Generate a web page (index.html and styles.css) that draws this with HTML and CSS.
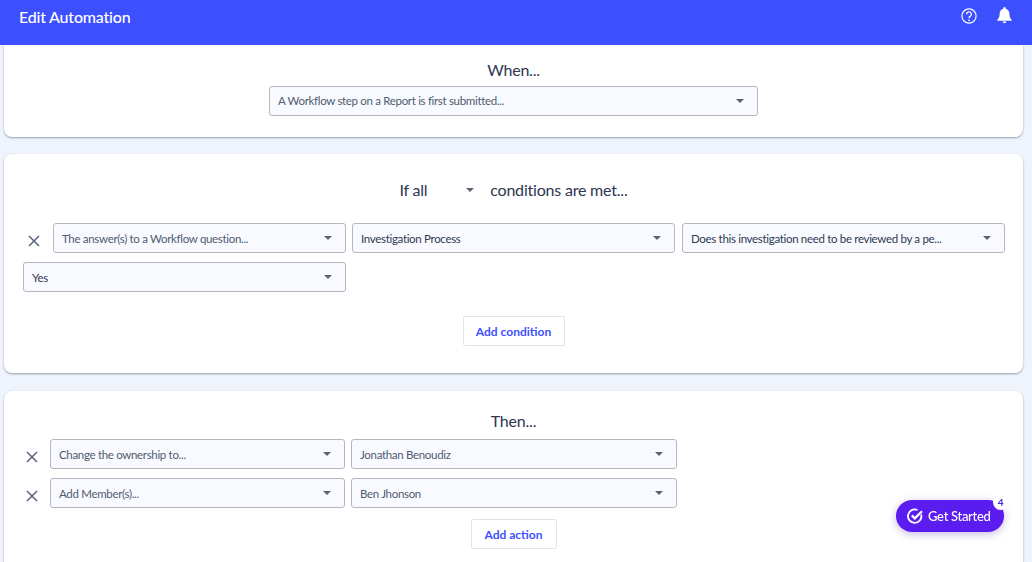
FILE: index.html
```html
<!DOCTYPE html>
<html lang="en">
<head>
<meta charset="utf-8">
<title>Edit Automation</title>
<link rel="stylesheet" href="styles.css">
</head>
<body>
<header class="topbar">
  <h1 class="topbar-title">Edit Automation</h1>
  <div class="topbar-icons">
    <svg class="icon-help" width="16" height="16" viewBox="0 0 18 18" fill="none" stroke="#fff"><circle cx="9" cy="9" r="8" stroke-width="1.300"/><path d="M6.300 7a2.700 2.700 0 1 1 4 2.400c-.9.500-1.300 1-1.300 2" stroke-width="1.500"/><circle cx="9" cy="13.800" r="1" fill="#fff" stroke="none"/></svg>
    <svg class="icon-bell" width="15" height="17" viewBox="0 0 16 18" fill="#fff"><path d="M8 0a1.300 1.300 0 0 0-1.300 1.300v.6C4.300 2.500 2.800 4.500 2.800 7.200c0 3.400-.9 4.700-2.300 6.200-.4.500 0 1.100.6 1.100h13.800c.6 0 1-.6.6-1.100-1.400-1.500-2.300-2.800-2.300-6.200 0-2.700-1.500-4.700-3.900-5.300v-.6A1.300 1.300 0 0 0 8 0z"/><path d="M6.100 15.500a1.900 1.900 0 0 0 3.800 0z"/></svg>
  </div>
</header>

<main class="content">
  <section class="card card-when">
    <h2 class="card-title">When...</h2>
    <div class="center-row">
      <div class="select select-when"><span class="select-text lift">A Workflow step on a Report is first submitted...</span><i class="caret"></i></div>
    </div>
  </section>

  <section class="card card-if">
    <h2 class="card-title if-title">If all <span class="inline-select"><i class="caret"></i></span> conditions are met...</h2>
    <div class="condition-rows">
      <div class="condition-row">
        <button class="remove" type="button" aria-label="Remove"><svg width="12" height="12" viewBox="0 0 12 12" stroke="#56627c" stroke-width="1.500" fill="none"><path d="M1 1l10 10M11 1L1 11"/></svg></button>
        <div class="select w-293"><span class="select-text">The answer(s) to a Workflow question...</span><i class="caret"></i></div>
        <div class="select w-323"><span class="select-text dark">Investigation Process</span><i class="caret"></i></div>
        <div class="select w-323 push-1"><span class="select-text dark">Does this investigation need to be reviewed by a pe...</span><i class="caret"></i></div>
      </div>
      <div class="condition-row">
        <div class="select w-323"><span class="select-text dark">Yes</span><i class="caret"></i></div>
      </div>
    </div>
    <div class="center-row"><button class="add-btn btn-condition" type="button">Add condition</button></div>
  </section>

  <section class="card card-then">
    <h2 class="card-title">Then...</h2>
    <div class="action-rows">
      <div class="action-row">
        <button class="remove" type="button" aria-label="Remove"><svg width="12" height="12" viewBox="0 0 12 12" stroke="#56627c" stroke-width="1.500" fill="none"><path d="M1 1l10 10M11 1L1 11"/></svg></button>
        <div class="select w-295"><span class="select-text">Change the ownership to...</span><i class="caret"></i></div>
        <div class="select w-326"><span class="select-text">Jonathan Benoudiz</span><i class="caret"></i></div>
      </div>
      <div class="action-row">
        <button class="remove" type="button" aria-label="Remove"><svg width="12" height="12" viewBox="0 0 12 12" stroke="#56627c" stroke-width="1.500" fill="none"><path d="M1 1l10 10M11 1L1 11"/></svg></button>
        <div class="select w-295"><span class="select-text">Add Member(s)...</span><i class="caret"></i></div>
        <div class="select w-326"><span class="select-text">Ben Jhonson</span><i class="caret"></i></div>
      </div>
    </div>
    <div class="center-row"><button class="add-btn btn-action" type="button">Add action</button></div>
  </section>
</main>

<button class="get-started" type="button">
  <svg width="16" height="16" viewBox="0 0 16 16" fill="none" stroke="#fff" stroke-width="1.800"><path d="M14.200 6.500A6.700 6.700 0 1 1 10.500 2"/><path d="M4.800 7.400l3 3L15 3.200" stroke-width="2.200"/></svg>
  <span>Get Started</span>
  <b class="badge">4</b>
</button>
</body>
</html>
```

FILE: styles.css
```css
* { box-sizing: border-box; }
html, body { height: 100%; }
body {
  margin: 0;
  height: 562px;
  overflow: hidden;
  background: #eff3fb;
  font-family: Lato, "Open Sans", sans-serif;
  color: #2c3650;
}
.topbar {
  height: 45px;
  background: #3d50ff;
  display: flex;
  align-items: flex-start;
  justify-content: space-between;
  padding: 0 20px 0 19px;
}
.topbar-title {
  margin: 5px 0 0;
  color: #fff;
  font-size: 16px;
  font-weight: 500;
  letter-spacing: -.2px;
  line-height: 24px;
}
.topbar-icons {
  display: flex;
  align-items: center;
  gap: 20px;
  padding: 7px 0 0;
}
.content {
  padding: 0 9px 0 4px;
  display: flex;
  flex-direction: column;
  gap: 17px;
}
.card {
  background: #fff;
  border-radius: 8px;
  box-shadow: 0 1px 2px rgba(40, 50, 80, .45);
}
.card-when {
  height: 92px;
  border-radius: 0 0 8px 8px;
  padding-top: 14px;
}
.card-when .card-title { margin-bottom: 6px; }
.card-if { height: 219px; padding-top: 24px; margin-bottom: 1px; }
.card-then {
  height: 171px;
  padding-top: 19px;
  border-radius: 8px 8px 0 0;
}
.card-title {
  margin: 0 0 5px;
  text-align: center;
  font-size: 16px;
  font-weight: 400;
  letter-spacing: -.2px;
  line-height: 21px;
  color: #2c3650;
}
.card-then .card-title { margin-bottom: 8px; }
.if-title {
  margin-bottom: 21px;
  height: 24px;
  line-height: 24px;
  display: flex;
  justify-content: center;
  align-items: center;
  white-space: pre;
}
.inline-select {
  width: 55px;
  display: flex;
  justify-content: flex-end;
  padding-right: 12px;
}
.center-row { display: flex; justify-content: center; }
.select {
  height: 30px;
  flex: none;
  display: flex;
  align-items: center;
  justify-content: space-between;
  padding: 0 13px 0 8px;
  background: #f9faff;
  border: 1px solid #b4b7c0;
  border-bottom-width: 1.500px;
  border-radius: 3px;
}
.select-text {
  font-size: 11.500px;
  letter-spacing: -.32px;
  color: #4f5a70;
  white-space: nowrap;
}
.select-text.lift { padding-bottom: 2px; }
.select-text.dark { color: #2f3950; }
.caret {
  width: 0;
  height: 0;
  border-left: 4px solid transparent;
  border-right: 4px solid transparent;
  border-top: 4px solid #5c6270;
}
.select-when { width: 489px; }
.w-293 { width: 293px; }
.w-323 { width: 323px; }
.w-295 { width: 295px; }
.w-326 { width: 326px; }
.push-1 { margin-left: 1px; }
.condition-rows {
  padding-left: 19px;
  display: flex;
  flex-direction: column;
  gap: 9px;
}
.condition-row {
  display: flex;
  align-items: center;
  gap: 6px;
}
.action-rows {
  padding-left: 17px;
  display: flex;
  flex-direction: column;
  gap: 9px;
}
.action-row {
  display: flex;
  align-items: center;
  gap: 6px;
}
.remove {
  width: 24px;
  height: 30px;
  padding: 6px 2px 0 0;
  border: 0;
  background: none;
  display: flex;
  align-items: center;
  justify-content: center;
}
.action-row .remove { margin-left: -1px; padding: 5px 0 0; }
.add-btn {
  height: 30px;
  background: #fff;
  border: 1px solid #e1e3ea;
  border-radius: 2px;
  color: #3d50ff;
  font-family: inherit;
  font-size: 12px;
  font-weight: 700;
}
.btn-condition { width: 102px; margin-top: 24px; }
.btn-action { width: 86px; margin-top: 11px; }
.get-started {
  position: fixed;
  left: 896px;
  top: 500px;
  width: 108px;
  height: 32px;
  border: 0;
  border-radius: 16px;
  background: #5b1cf0;
  color: #fff;
  font-family: inherit;
  font-size: 13px;
  font-weight: 500;
  letter-spacing: -.3px;
  display: flex;
  align-items: center;
  gap: 5px;
  padding: 0 0 0 11px;
  box-shadow: 0 2px 8px rgba(60, 30, 160, .3);
}
.badge {
  position: absolute;
  left: 97px;
  top: -5px;
  width: 15px;
  height: 15px;
  border-radius: 50%;
  background: #fff;
  color: #4a22d8;
  font-size: 10px;
  line-height: 15px;
  text-align: center;
  font-weight: 700;
}
```
